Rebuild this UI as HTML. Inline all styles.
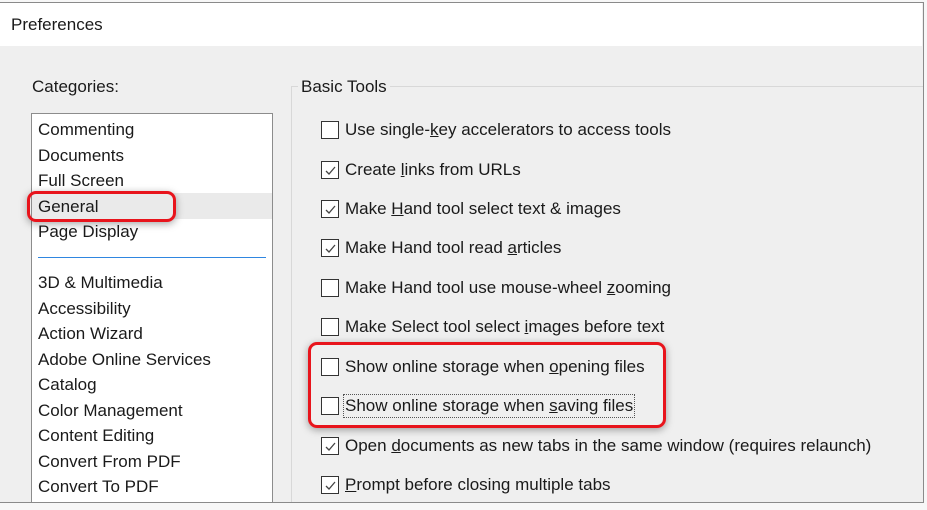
<!DOCTYPE html>
<html><head><meta charset="utf-8"><style>
*{margin:0;padding:0;box-sizing:border-box}
body{width:927px;height:510px;background:#f7f7f7;font-family:"Liberation Sans",sans-serif;color:#1a1a1a;position:relative;overflow:hidden}
.win{position:absolute;left:0;top:2px;width:924px;height:501px;background:#efefef;border:1px solid #8a8a8a;border-left:none;overflow:hidden}
.title{position:absolute;left:0;top:0;width:922px;height:43px;background:#fff;font-size:17px;padding:12px 0 0 11px}
.lbl{position:absolute;font-size:17px}
.list{position:absolute;left:31px;top:110px;width:242px;height:400px;background:#fff;border:1px solid #8c8c8c}
.it{position:absolute;left:6px;font-size:17px;line-height:20px}
.sel{position:absolute;left:0;top:79px;width:240px;height:26px;background:#eaeaea}
.sep{position:absolute;left:6px;top:143px;width:228px;height:1px;background:#2f86e0}
.grp{position:absolute;left:291px;top:83px;width:640px;height:430px;border-left:1px solid #d8d8d8;border-top:1px solid #d8d8d8}
.cb{position:absolute;left:321px;width:18px;height:18px;background:#fff;border:1px solid #333}
.cb svg{position:absolute;left:2px;top:2px}
.t{position:absolute;left:345px;font-size:17px;line-height:20px;white-space:nowrap}
u{text-decoration:underline}
.red{position:absolute;border:3px solid #e8141c;border-radius:9px;box-shadow:0 2px 8px rgba(0,0,0,.35)}
</style></head><body>
<div class="win">
<div class="title">Preferences</div>
<div class="lbl" style="left:32px;top:74px">Categories:</div>
<div class="list">
<div class="sel"></div>
<div class="it" style="top:6px">Commenting</div>
<div class="it" style="top:32px">Documents</div>
<div class="it" style="top:57px">Full Screen</div>
<div class="it" style="top:83px">General</div>
<div class="it" style="top:108px">Page Display</div>
<div class="sep"></div>
<div class="it" style="top:159px">3D &amp; Multimedia</div>
<div class="it" style="top:185px">Accessibility</div>
<div class="it" style="top:210px">Action Wizard</div>
<div class="it" style="top:236px">Adobe Online Services</div>
<div class="it" style="top:261px">Catalog</div>
<div class="it" style="top:287px">Color Management</div>
<div class="it" style="top:312px">Content Editing</div>
<div class="it" style="top:338px">Convert From PDF</div>
<div class="it" style="top:363px">Convert To PDF</div>
</div>
<div class="grp"></div>
<div class="lbl" style="left:298px;top:74px;background:#efefef;padding:0 3px">Basic Tools</div>
</div>

<div class="cb" style="top:121px"></div><div class="t" style="top:120px">Use single-<u>k</u>ey accelerators to access tools</div>
<div class="cb" style="top:161px"><svg width="13" height="13"><path d="M2 7l3 3 6-7" stroke="#444" stroke-width="1.3" fill="none"/></svg></div><div class="t" style="top:160px">Create <u>l</u>inks from URLs</div>
<div class="cb" style="top:200px"><svg width="13" height="13"><path d="M2 7l3 3 6-7" stroke="#444" stroke-width="1.3" fill="none"/></svg></div><div class="t" style="top:199px">Make <u>H</u>and tool select text &amp; images</div>
<div class="cb" style="top:239px"><svg width="13" height="13"><path d="M2 7l3 3 6-7" stroke="#444" stroke-width="1.3" fill="none"/></svg></div><div class="t" style="top:238px">Make Hand tool read <u>a</u>rticles</div>
<div class="cb" style="top:279px"></div><div class="t" style="top:278px">Make Hand tool use mouse-wheel <u>z</u>ooming</div>
<div class="cb" style="top:318px"></div><div class="t" style="top:317px">Make Select tool select <u>i</u>mages before text</div>
<div class="cb" style="top:358px"></div><div class="t" style="top:357px">Show online storage when <u>o</u>pening files</div>
<div class="cb" style="top:397px"></div><div class="t" style="top:396px;outline:1px dotted #555;outline-offset:1px">Show online storage when <u>s</u>aving files</div>
<div class="cb" style="top:437px"><svg width="13" height="13"><path d="M2 7l3 3 6-7" stroke="#444" stroke-width="1.3" fill="none"/></svg></div><div class="t" style="top:436px">Open <u>d</u>ocuments as new tabs in the same window (requires relaunch)</div>
<div class="cb" style="top:476px"><svg width="13" height="13"><path d="M2 7l3 3 6-7" stroke="#444" stroke-width="1.3" fill="none"/></svg></div><div class="t" style="top:475px"><u>P</u>rompt before closing multiple tabs</div>

<div class="red" style="left:27px;top:191px;width:149px;height:31px"></div>
<div class="red" style="left:308px;top:342px;width:358px;height:86px"></div>
</body></html>
